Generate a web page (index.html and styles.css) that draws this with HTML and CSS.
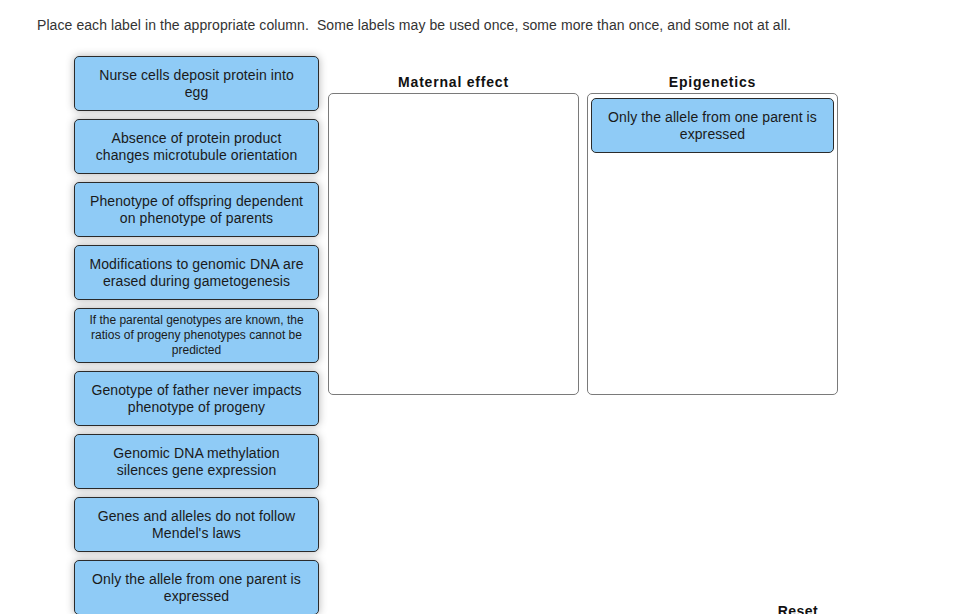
FILE: index.html
```html
<!DOCTYPE html>
<html lang="en">
<head>
    <meta charset="UTF-8">
    <meta name="viewport" content="width=device-width, initial-scale=1.0">
    <title>Label Sorting</title>
    <link rel="stylesheet" href="styles.css">
</head>
<body>
    <p class="instructions">Place each label in the appropriate column.&nbsp; Some labels may be used once, some more than once, and some not at all.</p>

    <main class="workspace">
        <div class="label-bank">
            <div class="label">Nurse cells deposit protein into egg</div>
            <div class="label">Absence of protein product changes microtubule orientation</div>
            <div class="label">Phenotype of offspring dependent on phenotype of parents</div>
            <div class="label">Modifications to genomic DNA are erased during gametogenesis</div>
            <div class="label small">If the parental genotypes are known, the ratios of progeny phenotypes cannot be predicted</div>
            <div class="label">Genotype of father never impacts phenotype of progeny</div>
            <div class="label">Genomic DNA methylation silences gene expression</div>
            <div class="label">Genes and alleles do not follow Mendel's laws</div>
            <div class="label">Only the allele from one parent is expressed</div>
        </div>

        <div class="board">
            <div class="columns">
                <div class="column">
                    <h2 class="column-title">Maternal effect</h2>
                    <div class="drop-zone"></div>
                </div>
                <div class="column">
                    <h2 class="column-title">Epigenetics</h2>
                    <div class="drop-zone">
                        <div class="label">Only the allele from one parent is expressed</div>
                    </div>
                </div>
            </div>
            <div class="controls">
                <button class="reset-button">Reset</button>
            </div>
        </div>
    </main>
</body>
</html>
```

FILE: styles.css
```css
body {
    margin: 0;
    font-family: "Liberation Sans", Arial, sans-serif;
    color: #222;
    background-color: #fff;
    overflow: hidden;
}

.instructions {
    margin: 0;
    padding: 17px 0 0 37px;
    font-size: 14px;
    line-height: 16px;
    letter-spacing: 0.08px;
    color: #333;
}

.workspace {
    display: flex;
    gap: 9px;
    padding: 23px 0 0 74px;
}

.label-bank {
    width: 245px;
    display: flex;
    flex-direction: column;
    gap: 8px;
}

.label {
    box-sizing: border-box;
    height: 55px;
    padding: 0 13px;
    display: flex;
    align-items: center;
    justify-content: center;
    text-align: center;
    font-size: 14px;
    line-height: 17px;
    letter-spacing: 0.1px;
    color: #1a1a1a;
    background-color: #8fcbf6;
    border: 1px solid #2b2b2b;
    border-radius: 5px;
    box-shadow: 0 0 8px rgba(0, 0, 0, 0.3);
}

.label.small {
    font-size: 12px;
    line-height: 15px;
    padding: 0 8px;
    letter-spacing: 0;
}

.board {
    width: 510px;
}

.columns {
    display: flex;
    gap: 8px;
}

.column {
    width: 251px;
}

.column-title {
    margin: 0 0 2px;
    padding-top: 18px;
    font-size: 14px;
    line-height: 17px;
    font-weight: bold;
    text-align: center;
    color: #111;
    letter-spacing: 0.8px;
}

.drop-zone {
    box-sizing: border-box;
    height: 302px;
    padding: 4px 3px;
    border: 1px solid #7a7a7a;
    border-radius: 5px;
}

.drop-zone .label {
    box-shadow: none;
}

.controls {
    display: flex;
    justify-content: flex-end;
    padding: 208px 20px 0 0;
}

.reset-button {
    padding: 0;
    border: none;
    background: none;
    font-family: "Liberation Sans", Arial, sans-serif;
    font-size: 14px;
    font-weight: bold;
    letter-spacing: 0.4px;
    color: #111;
    cursor: pointer;
}
```
